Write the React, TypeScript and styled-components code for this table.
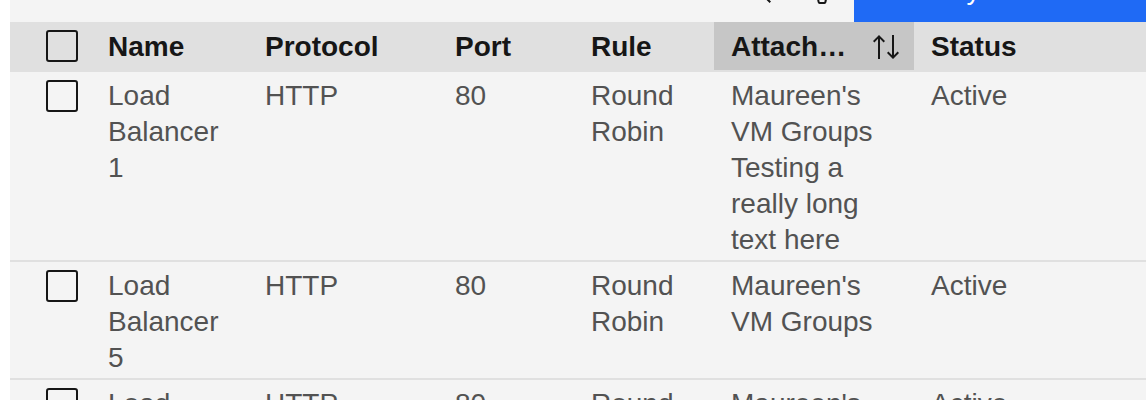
import React from "react";
import styled, { createGlobalStyle } from "styled-components";

const GlobalStyle = createGlobalStyle`
  html, body {
    margin: 0;
    padding: 0;
    background: #ffffff;
    font-family: "Liberation Sans", Arial, sans-serif;
  }
  * { box-sizing: border-box; }
`;

const Page = styled.div`
  padding-left: 10px;
  height: 400px;
  overflow: hidden;
`;

const Container = styled.div`
  background: #f4f4f4;
  display: flex;
  flex-direction: column;
`;

const Toolbar = styled.div`
  display: flex;
  justify-content: flex-end;
  align-items: stretch;
  height: 64px;
  margin-top: -42px;
  background: #f4f4f4;
`;

const ToolbarIcon = styled.button`
  width: 64px;
  height: 64px;
  border: none;
  padding: 0;
  background: transparent;
  display: flex;
  align-items: center;
  justify-content: center;
  color: #161616;
`;

const PrimaryButton = styled.button`
  width: 292px;
  height: 64px;
  border: none;
  background: #1f6af5;
  color: #ffffff;
  font-family: "Liberation Sans", Arial, sans-serif;
  font-size: 28px;
  text-align: left;
  padding: 0 0 0 30px;
  display: flex;
  align-items: center;
`;

const Table = styled.table`
  width: 100%;
  border-collapse: collapse;
  table-layout: fixed;
  font-size: 28px;
  line-height: 36px;
`;

const Col = styled.col<{ $w?: number }>`
  width: ${(p) => (p.$w ? `${p.$w}px` : "auto")};
`;

const HeadRow = styled.tr`
  background: #e0e0e0;
  height: 48px;
`;

const Th = styled.th<{ $sorted?: boolean }>`
  padding: ${(p) => (p.$sorted ? "0" : "2px 16px 0 17px")};
  text-align: left;
  vertical-align: middle;
  font-weight: 700;
  color: #161616;
  white-space: nowrap;
  background: ${(p) => (p.$sorted ? "#c6c6c6" : "transparent")};
`;

const CheckTh = styled.th`
  padding: 0 0 0 36px;
  text-align: left;
  vertical-align: middle;
`;

const SortButton = styled.div`
  display: flex;
  align-items: center;
  height: 48px;
  padding: 2px 12px 0 17px;
  justify-content: space-between;
`;

const SortLabel = styled.span`
  display: block;
  max-width: 130px;
  overflow: hidden;
  text-overflow: ellipsis;
  white-space: nowrap;
`;

const Row = styled.tr`
  border-top: 2px solid #e0e0e0;
`;

const Td = styled.td`
  padding: 6px 16px 2px 17px;
  vertical-align: top;
  color: #525252;
`;

const CheckTd = styled.td`
  padding: 8px 0 0 36px;
  vertical-align: top;
`;

const Checkbox = styled.input.attrs({ type: "checkbox" })`
  appearance: none;
  -webkit-appearance: none;
  display: block;
  margin: 0;
  width: 32px;
  height: 32px;
  border: 2px solid #161616;
  border-radius: 3px;
  background: transparent;
`;

const SearchIcon = () => (
  <svg width="32" height="32" viewBox="0 0 32 32" fill="currentColor">
    <path d="M29,27.5859l-7.5521-7.5521a11.0177,11.0177,0,1,0-1.4141,1.4141L27.5859,29ZM4,13a9,9,0,1,1,9,9A9.01,9.01,0,0,1,4,13Z" />
  </svg>
);

const SettingsIcon = () => (
  <svg width="32" height="32" viewBox="0 0 32 32" fill="currentColor">
    <path d="M27,16.76c0-.25,0-.5,0-.76s0-.51,0-.77l1.92-1.68A2,2,0,0,0,29.3,11L26.94,7a2,2,0,0,0-1.73-1,2,2,0,0,0-.64.1l-2.430.82a11.35,11.35,0,0,0-1.31-.75l-.51-2.52a2,2,0,0,0-2-1.61H13.64a2,2,0,0,0-2,1.61l-.51,2.52a11.48,11.48,0,0,0-1.32.75L7.43,6.06A2,2,0,0,0,6.79,6,2,2,0,0,0,5.06,7L2.7,11a2,2,0,0,0,.41,2.51L5,15.24c0,.25,0,.5,0,.76s0,.51,0,.77L3.11,18.45A2,2,0,0,0,2.7,21L5.06,25a2,2,0,0,0,1.73,1,2,2,0,0,0,.64-.1l2.43-.82a11.35,11.35,0,0,0,1.31.75l.51,2.52a2,2,0,0,0,2,1.61h4.72a2,2,0,0,0,2-1.61l.51-2.520a11.48,11.48,0,0,0,1.32-.75l2.42.82a2,2,0,0,0,.64.1,2,2,0,0,0,1.73-1L29.3,21a2,2,0,0,0-.41-2.51ZM25.21,24l-3.43-1.16a8.86,8.86,0,0,1-2.71,1.57L18.36,28H13.64l-.71-3.55a9.36,9.36,0,0,1-2.7-1.57L6.79,24,4.43,20l2.72-2.4a8.9,8.9,0,0,1,0-3.13L4.43,12,6.79,8l3.43,1.16a8.86,8.86,0,0,1,2.71-1.57L13.64,4h4.72l.71,3.55a9.36,9.36,0,0,1,2.7,1.57L25.21,8,27.57,12l-2.72,2.4a8.9,8.9,0,0,1,0,3.13L27.57,20Z" />
    <path d="M16,22a6,6,0,1,1,6-6A5.94,5.94,0,0,1,16,22Zm0-10a3.91,3.91,0,0,0-4,4,3.91,3.91,0,0,0,4,4,3.91,3.91,0,0,0,4-4A3.91,3.91,0,0,0,16,12Z" />
  </svg>
);

const SortIcon = () => (
  <svg width="32" height="32" viewBox="0 0 32 32" fill="#161616">
    <path d="M27.6 20.6L24 24.2V4h-2v20.2l-3.6-3.6L17 22l6 6 6-6-1.4-1.4zM9 4L3 10l1.4 1.4L8 7.8V28h2V7.8l3.6 3.6L15 10 9 4z" />
  </svg>
);

type RowData = {
  name: string;
  protocol: string;
  port: number;
  rule: string;
  attached: string;
  status: string;
};

const rows: RowData[] = [
  {
    name: "Load Balancer 1",
    protocol: "HTTP",
    port: 80,
    rule: "Round Robin",
    attached: "Maureen's VM Groups Testing a really long text here",
    status: "Active",
  },
  {
    name: "Load Balancer 5",
    protocol: "HTTP",
    port: 80,
    rule: "Round Robin",
    attached: "Maureen's VM Groups",
    status: "Active",
  },
  {
    name: "Load Balancer 2",
    protocol: "HTTP",
    port: 80,
    rule: "Round Robin",
    attached: "Maureen's VM Groups",
    status: "Active",
  },
];

export default function App() {
  return (
    <>
      <GlobalStyle />
      <Page>
        <Container>
          <Toolbar>
            <ToolbarIcon aria-label="Search">
              <SearchIcon />
            </ToolbarIcon>
            <ToolbarIcon aria-label="Settings">
              <SettingsIcon />
            </ToolbarIcon>
            <PrimaryButton>Primary Button</PrimaryButton>
          </Toolbar>
          <Table>
            <colgroup>
              <Col $w={81} />
              <Col $w={157} />
              <Col $w={190} />
              <Col $w={136} />
              <Col $w={140} />
              <Col $w={200} />
              <Col />
            </colgroup>
            <thead>
              <HeadRow>
                <CheckTh>
                  <Checkbox aria-label="Select all" />
                </CheckTh>
                <Th>Name</Th>
                <Th>Protocol</Th>
                <Th>Port</Th>
                <Th>Rule</Th>
                <Th $sorted>
                  <SortButton>
                    <SortLabel>Attached groups</SortLabel>
                    <SortIcon />
                  </SortButton>
                </Th>
                <Th>Status</Th>
              </HeadRow>
            </thead>
            <tbody>
              {rows.map((r, i) => (
                <Row key={i}>
                  <CheckTd>
                    <Checkbox aria-label={`Select ${r.name}`} />
                  </CheckTd>
                  <Td>{r.name}</Td>
                  <Td>{r.protocol}</Td>
                  <Td>{r.port}</Td>
                  <Td>{r.rule}</Td>
                  <Td>{r.attached}</Td>
                  <Td>{r.status}</Td>
                </Row>
              ))}
            </tbody>
          </Table>
        </Container>
      </Page>
    </>
  );
}
